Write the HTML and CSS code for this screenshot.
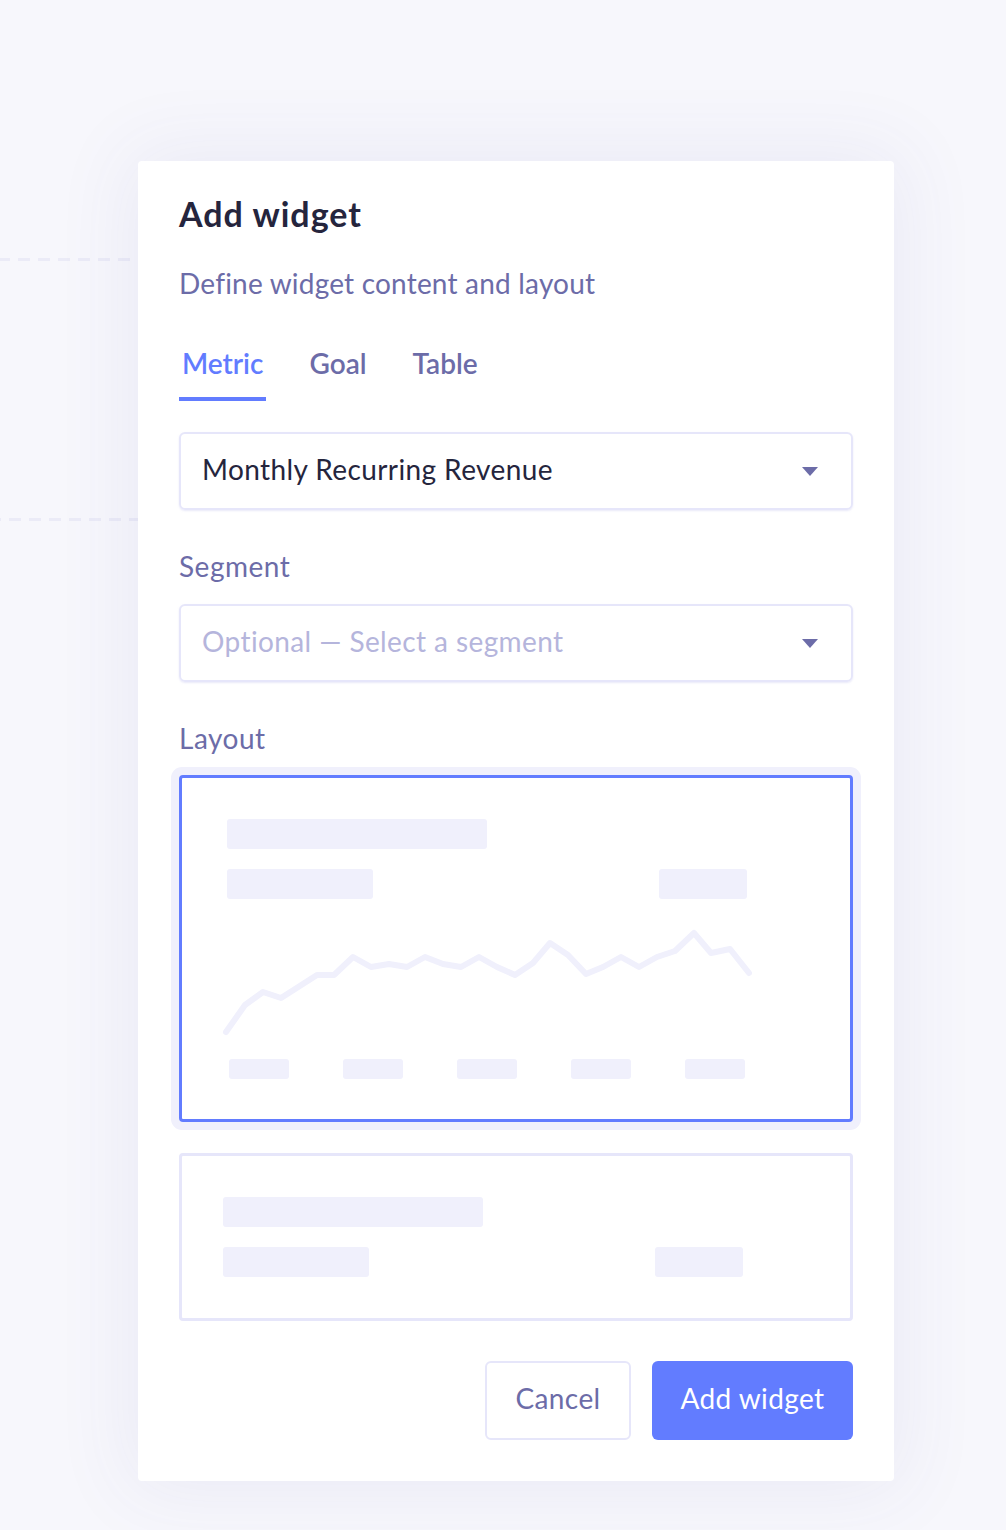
FILE: index.html
```html
<!DOCTYPE html>
<html lang="en">
<head>
    <meta charset="UTF-8">
    <meta name="viewport" content="width=device-width, initial-scale=1.0">
    <title>Add widget</title>
    <link rel="stylesheet" href="styles.css">
</head>
<body>
    <!-- faint grid lines of the dashboard behind the dialog -->
    <div class="grid-line grid-line-top"></div>
    <div class="grid-line grid-line-bottom"></div>

    <div class="dialog">
        <h1 class="dialog-title">Add widget</h1>
        <p class="dialog-subtitle">Define widget content and layout</p>

        <div class="tabs">
            <button class="tab active">Metric</button>
            <button class="tab">Goal</button>
            <button class="tab">Table</button>
        </div>

        <div class="select">
            <span class="select-value">Monthly Recurring Revenue</span>
            <svg class="caret" width="16" height="9" viewBox="0 0 16 9"><path d="M0 0h16l-8 9z"/></svg>
        </div>

        <label class="field-label">Segment</label>
        <div class="select">
            <span class="select-value placeholder">Optional — Select a segment</span>
            <svg class="caret" width="16" height="9" viewBox="0 0 16 9"><path d="M0 0h16l-8 9z"/></svg>
        </div>

        <label class="field-label">Layout</label>

        <div class="layout-option selected">
            <div class="skeleton-row">
                <div class="bone bone-wide"></div>
            </div>
            <div class="skeleton-row split">
                <div class="bone bone-mid"></div>
                <div class="bone bone-short"></div>
            </div>
            <svg class="sparkline" width="534" height="110" viewBox="0 0 534 110">
                <polyline points="3,107 22,80 40,67 58,73 94,50 111,50 130,32 148,42 166,39 184,42 202,32 220,39 238,42 256,32 274,42 292,50 310,38 327,18 345,30 363,49 380,42 398,32 416,42 434,32 452,26 471,8 488,28 507,24 526,48"/>
            </svg>
            <div class="axis">
                <div class="bone tick"></div>
                <div class="bone tick"></div>
                <div class="bone tick"></div>
                <div class="bone tick"></div>
                <div class="bone tick"></div>
            </div>
        </div>

        <div class="layout-option">
            <div class="skeleton-row">
                <div class="bone bone-wide"></div>
            </div>
            <div class="skeleton-row split">
                <div class="bone bone-mid"></div>
                <div class="bone bone-short"></div>
            </div>
        </div>

        <div class="actions">
            <button class="btn btn-secondary">Cancel</button>
            <button class="btn btn-primary">Add widget</button>
        </div>
    </div>
</body>
</html>
```

FILE: styles.css
```css
body {
    margin: 0;
    min-height: 1530px;
    background-color: #f7f7fc;
    font-family: Lato, "Open Sans", sans-serif;
    color: #25253d;
    position: relative;
    overflow: hidden;
}
.grid-line {
    position: absolute;
    left: 0;
    width: 140px;
    height: 3px;
    background: repeating-linear-gradient(90deg, #ebebf7 0 12px, transparent 12px 20px);
}
.grid-line-top {
    top: 258px;
    background-position: -2px 0;
}
.grid-line-bottom {
    top: 518px;
    background-position: 9px 0;
}
.dialog {
    position: relative;
    box-sizing: border-box;
    width: 756px;
    margin: 161px 0 0 138px;
    padding: 33px 41px 41px;
    background-color: #fff;
    border-radius: 4px;
    box-shadow: 0 0 80px 10px rgba(72, 72, 150, 0.07);
}
.dialog-title {
    margin: 0;
    font-size: 34px;
    line-height: 40px;
    font-weight: 700;
    letter-spacing: 1px;
    color: #25253d;
}
.dialog-subtitle {
    margin: 31px 0 0;
    font-size: 28px;
    line-height: 36px;
    letter-spacing: 0.2px;
    color: #6c6ca8;
}
.tabs {
    display: flex;
    gap: 40px;
    margin-top: 44px;
}
.tab {
    padding: 0 3px 16px;
    border: 0;
    border-bottom: 4px solid transparent;
    background: none;
    font-family: inherit;
    font-size: 28px;
    line-height: 36px;
    font-weight: 600;
    color: #6c6ca8;
    cursor: pointer;
}
.tab.active {
    color: #627cff;
    border-bottom-color: #627cff;
}
.select {
    display: flex;
    align-items: center;
    justify-content: space-between;
    box-sizing: border-box;
    height: 78px;
    margin-top: 31px;
    padding: 0 33px 5px 21px;
    border: 2px solid #e6e6fa;
    border-radius: 6px;
    box-shadow: 0 1px 2px rgba(200, 200, 240, 0.4);
}
.select-value {
    font-size: 28px;
    line-height: 28px;
    letter-spacing: 0.4px;
    color: #25253d;
}
.select-value.placeholder {
    color: #b5b5dc;
}
.caret {
    margin-top: 5px;
    fill: #6c6ca8;
}
.field-label {
    display: block;
    margin-top: 38px;
    font-size: 28px;
    line-height: 36px;
    letter-spacing: 0.5px;
    color: #6c6ca8;
}
.field-label + .select {
    margin-top: 20px;
}
.select + .field-label + .layout-option {
    margin-top: 19px;
}
.layout-option {
    box-sizing: border-box;
    margin-top: 31px;
    padding: 41px;
    border: 3px solid #e6e6fa;
    border-radius: 4px;
}
.layout-option.selected {
    padding-left: 45px;
    padding-bottom: 40px;
    border-color: #627cff;
    box-shadow: 0 0 0 8px #f0f0fc;
}
.skeleton-row {
    display: flex;
    width: 520px;
}
.skeleton-row + .skeleton-row {
    margin-top: 20px;
}
.skeleton-row.split {
    justify-content: space-between;
}
.bone {
    height: 30px;
    background-color: #f0f0fc;
    border-radius: 3px;
}
.bone-wide { width: 260px; }
.bone-mid { width: 146px; }
.bone-short { width: 88px; }
.sparkline {
    display: block;
    margin: 26px 0 0 -4px;
    overflow: visible;
}
.sparkline polyline {
    fill: none;
    stroke: #f0f0fc;
    stroke-width: 6;
    stroke-linejoin: round;
    stroke-linecap: round;
}
.axis {
    display: flex;
    gap: 54px;
    margin-top: 24px;
    padding-left: 2px;
}
.bone.tick {
    width: 60px;
    height: 20px;
}
.actions {
    display: flex;
    justify-content: flex-end;
    gap: 21px;
    margin-top: 40px;
}
.btn {
    box-sizing: border-box;
    height: 79px;
    padding: 0 0 5px;
    border-radius: 6px;
    font-family: inherit;
    font-size: 28px;
    letter-spacing: 0.4px;
    cursor: pointer;
}
.btn-secondary {
    width: 146px;
    border: 2px solid #e6e6fa;
    background-color: #fff;
    color: #6c6ca8;
}
.btn-primary {
    width: 201px;
    border: 0;
    background-color: #627cff;
    color: #fff;
}
```
